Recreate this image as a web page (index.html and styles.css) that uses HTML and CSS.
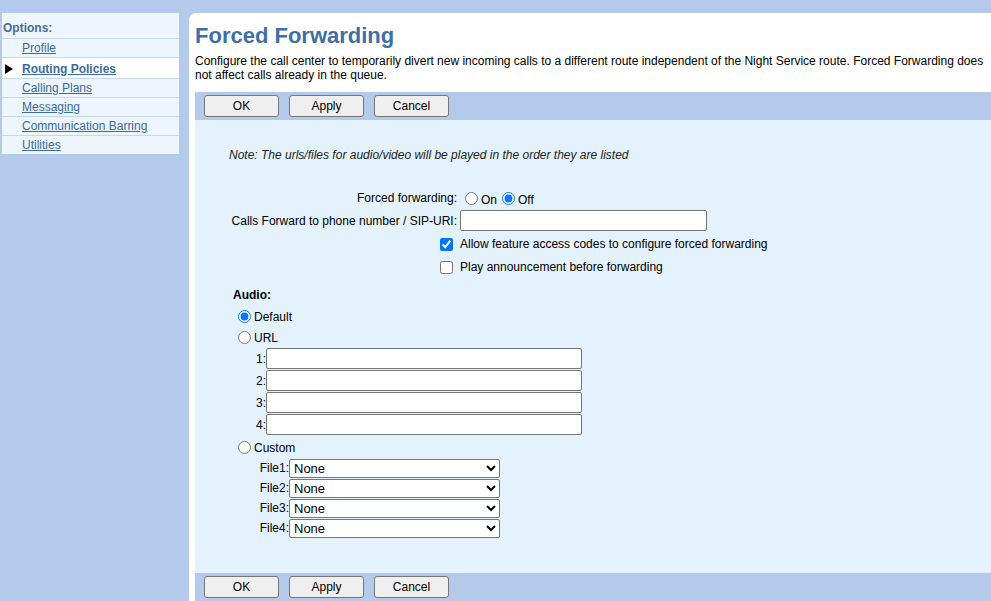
FILE: index.html
```html
<!DOCTYPE html>
<html lang="en">
<head>
    <meta charset="UTF-8">
    <meta name="viewport" content="width=device-width, initial-scale=1.0">
    <title>Forced Forwarding</title>
    <link rel="stylesheet" href="styles.css">
</head>
<body>

<div class="page">
    <div class="sidebar">
        <div class="side-title">Options:</div>
        <ul class="side-menu">
            <li><a href="#">Profile</a></li>
            <li class="current"><span class="arrow"></span><a href="#">Routing Policies</a></li>
            <li><a href="#">Calling Plans</a></li>
            <li><a href="#">Messaging</a></li>
            <li><a href="#">Communication Barring</a></li>
            <li><a href="#">Utilities</a></li>
        </ul>
    </div>

    <div class="main">
        <h1>Forced Forwarding</h1>
        <p class="desc">Configure the call center to temporarily divert new incoming calls to a different route independent of the Night Service route. Forced Forwarding does not affect calls already in the queue.</p>

        <div class="button-bar">
            <button>OK</button>
            <button>Apply</button>
            <button>Cancel</button>
        </div>

        <div class="content">
            <p class="note">Note: The urls/files for audio/video will be played in the order they are listed</p>

            <div class="form">
                <div class="row">
                    <span class="label">Forced forwarding:</span>
                    <span class="value">
                        <input type="radio" name="ff" id="ffOn"><label for="ffOn" class="opt">On</label>
                        <input type="radio" name="ff" id="ffOff" checked><label for="ffOff" class="opt">Off</label>
                    </span>
                </div>
                <div class="row">
                    <span class="label">Calls Forward to phone number / SIP-URI:</span>
                    <span class="value"><input type="text" class="phone"></span>
                </div>
                <div class="row">
                    <span class="label"><input type="checkbox" id="fac" checked></span>
                    <label class="value" for="fac">Allow feature access codes to configure forced forwarding</label>
                </div>
                <div class="row">
                    <span class="label"><input type="checkbox" id="ann"></span>
                    <label class="value" for="ann">Play announcement before forwarding</label>
                </div>
            </div>

            <div class="audio">
                <div class="audio-title">Audio:</div>
                <div class="choice">
                    <input type="radio" name="audio" id="aDefault" checked><label for="aDefault">Default</label>
                </div>
                <div class="choice">
                    <input type="radio" name="audio" id="aUrl"><label for="aUrl">URL</label>
                </div>
                <div class="url-row"><span class="num">1:</span><input type="text" class="url"></div>
                <div class="url-row"><span class="num">2:</span><input type="text" class="url"></div>
                <div class="url-row"><span class="num">3:</span><input type="text" class="url"></div>
                <div class="url-row"><span class="num">4:</span><input type="text" class="url"></div>
                <div class="choice custom">
                    <input type="radio" name="audio" id="aCustom"><label for="aCustom">Custom</label>
                </div>
                <div class="file-row"><span class="fname">File1:</span><select><option>None</option></select></div>
                <div class="file-row"><span class="fname">File2:</span><select><option>None</option></select></div>
                <div class="file-row"><span class="fname">File3:</span><select><option>None</option></select></div>
                <div class="file-row"><span class="fname">File4:</span><select><option>None</option></select></div>
            </div>
        </div>

        <div class="button-bar">
            <button>OK</button>
            <button>Apply</button>
            <button>Cancel</button>
        </div>
    </div>
</div>

</body>
</html>
```

FILE: styles.css
```css
body, html {
    margin: 0;
    padding: 0;
    height: 100%;
    overflow: hidden;
}
body {
    background: #b5c9ea;
    font-family: "Liberation Sans", Arial, sans-serif;
    font-size: 12px;
    color: #000;
}
.page {
    display: flex;
    gap: 10px;
    height: 100%;
    padding: 13px 0 0 2px;
    box-sizing: border-box;
}

/* left options menu */
.sidebar {
    width: 177px;
    align-self: flex-start;
    background: #eef6fd;
}
.side-title {
    height: 25px;
    line-height: 30px;
    padding-left: 1px;
    font-weight: bold;
    color: #4a6c93;
}
.side-menu {
    list-style: none;
    margin: 0;
    padding: 0;
}
.side-menu li {
    display: flex;
    align-items: center;
    height: 18px;
    padding-left: 20px;
    border-top: 1px solid #c6d8ef;
}
.side-menu li.current {
    height: 20px;
    padding-left: 3px;
    padding-top: 1px;
    box-sizing: content-box;
    height: 19px;
    background: #fff;
}
.side-menu a {
    color: #3a6aa3;
}
.side-menu li.current a {
    font-weight: bold;
}
.arrow {
    width: 0;
    height: 0;
    border-left: 8px solid #000;
    border-top: 5px solid transparent;
    border-bottom: 5px solid transparent;
    margin-right: 9px;
}

/* main panel */
.main {
    flex: 1;
    display: flex;
    flex-direction: column;
    background: #fff;
    border-top-left-radius: 7px;
    padding-left: 6px;
    min-width: 0;
}
.main h1 {
    margin: 10px 0 0;
    font-size: 22px;
    line-height: 26px;
    color: #3f6fa6;
}
.desc {
    margin: 5px 6px 10px 0;
    line-height: 14px;
}
.button-bar {
    display: flex;
    gap: 10px;
    height: 28px;
    padding: 3px 0 0 9px;
    box-sizing: border-box;
    background: #b5c9ea;
}
.button-bar button {
    width: 75px;
    height: 22px;
    padding: 0;
    font-family: "Liberation Sans", Arial, sans-serif;
    font-size: 12px;
    color: #000;
    background: #efefef;
    border: 1px solid #767676;
    border-radius: 3px;
}

.content {
    flex: 1;
    background: #e4f2fd;
    padding-top: 28px;
}
.note {
    margin: 0 0 24px 34px;
    line-height: 14px;
    font-style: italic;
    color: #222;
}

.form .row {
    display: flex;
    align-items: center;
    height: 23px;
}
.form .label {
    width: 262px;
    text-align: right;
    flex-shrink: 0;
}
.form .value {
    margin-left: 3px;
    display: flex;
    align-items: center;
}
.form input[type="radio"] {
    margin: 2px 3px 0 5px;
}
.form input[type="checkbox"] {
    margin: 0 4px 0 0;
    vertical-align: middle;
}
.opt {
    padding-top: 4px;
}
input[type="text"] {
    height: 21px;
    box-sizing: border-box;
    border: 1px solid #767676;
    border-radius: 2px;
    background: #fff;
    padding: 1px 2px;
}
.phone {
    width: 247px;
}

.audio {
    margin-top: 7px;
    padding-left: 38px;
}
.audio-title {
    height: 21px;
    line-height: 21px;
    font-weight: bold;
}
.choice {
    display: flex;
    align-items: center;
    height: 21px;
}
.choice input {
    margin: 0 3px 0 5px;
}
.choice.custom {
    margin-top: 2px;
}
.url-row {
    display: flex;
    align-items: center;
    margin-bottom: 1px;
}
.num {
    width: 33px;
    text-align: right;
}
.url {
    width: 316px;
}
.file-row {
    display: flex;
    align-items: center;
    height: 20px;
}
.fname {
    width: 56px;
    text-align: right;
}
.file-row select {
    width: 211px;
    height: 19px;
    padding: 0;
    font-family: "Liberation Sans", Arial, sans-serif;
    font-size: 13px;
    color: #000;
    background: #fff;
    border: 1px solid #767676;
    border-radius: 2px;
}
```
